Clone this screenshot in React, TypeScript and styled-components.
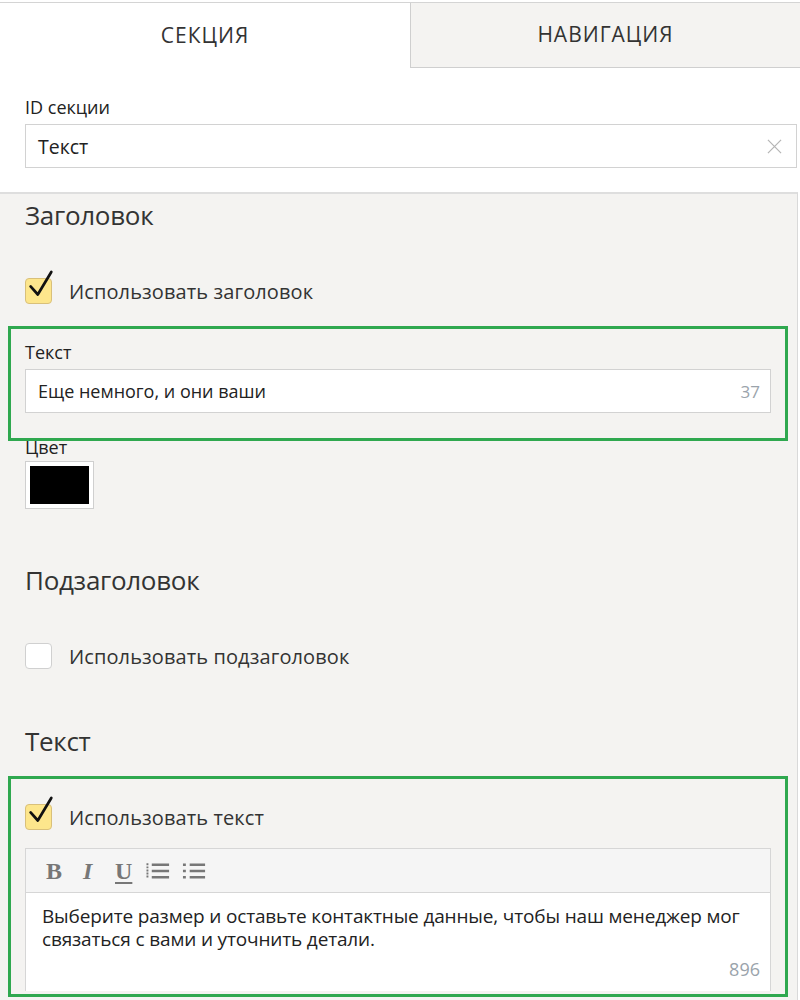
import styled, { createGlobalStyle } from "styled-components";

const GlobalStyle = createGlobalStyle`
  html, body {
    margin: 0;
    padding: 0;
    background: #ffffff;
  }
  body {
    font-family: "Open Sans", "Noto Sans", sans-serif;
    color: #333;
  }
`;

const App = () => {
  return (
    <>
      <GlobalStyle />
      <Page>
        <Tabs>
          <Tab active>СЕКЦИЯ</Tab>
          <Tab>НАВИГАЦИЯ</Tab>
        </Tabs>

        <TopArea>
          <FieldLabel>ID секции</FieldLabel>
          <InputBox>
            <InputText>Текст</InputText>
            <ClearIcon viewBox="0 0 16 16">
              <path d="M1 1 L15 15 M15 1 L1 15" />
            </ClearIcon>
          </InputBox>
        </TopArea>

        <Panel>
          <Heading top={6}>Заголовок</Heading>
          <CheckRow top={47}>
            <CheckBox checked>
              <CheckMark />
            </CheckBox>
            <CheckLabel>Использовать заголовок</CheckLabel>
          </CheckRow>

          <Highlight top={21} padTop={13} padBottom={25}>
            <FieldLabel>Текст</FieldLabel>
            <InputBox>
              <InputText big>Еще немного, и они ваши</InputText>
              <Counter>37</Counter>
            </InputBox>
          </Highlight>

          <ColorLabel>Цвет</ColorLabel>
          <Swatch>
            <SwatchFill />
          </Swatch>

          <Heading top={56}>Подзаголовок</Heading>
          <CheckRow top={47}>
            <CheckBox />
            <CheckLabel>Использовать подзаголовок</CheckLabel>
          </CheckRow>

          <Heading top={56}>Текст</Heading>

          <Highlight top={20} padTop={24} padBottom={3}>
            <CheckRow top={0}>
              <CheckBox checked>
                <CheckMark />
              </CheckBox>
              <CheckLabel>Использовать текст</CheckLabel>
            </CheckRow>
            <Editor>
              <Toolbar>
                <ToolButton w={37}>B</ToolButton>
                <ToolButton w={32} italic>I</ToolButton>
                <ToolButton w={31} underline>U</ToolButton>
                <ListIcon viewBox="0 0 26 18">
                  <path d="M1.5 1 V17" strokeWidth={2} strokeDasharray="2 1.2" />
                  <path d="M6 2.5 H24 M6 9 H24 M6 15.5 H24" />
                </ListIcon>
                <ListIcon viewBox="0 0 26 18">
                  <path d="M1 2.5 H4 M1 9 H4 M1 15.5 H4" />
                  <path d="M8 2.5 H24 M8 9 H24 M8 15.5 H24" />
                </ListIcon>
              </Toolbar>
              <EditorBody>
                <EditorText>
                  Выберите размер и оставьте контактные данные, чтобы наш менеджер мог
                  связаться с вами и уточнить детали.
                </EditorText>
                <EditorCounter>896</EditorCounter>
              </EditorBody>
            </Editor>
          </Highlight>
        </Panel>
      </Page>
    </>
  );
};

export default App;

const CheckMark = () => (
  <CheckSvg viewBox="0 0 30 34">
    <path d="M4 18 L12 27 L27 2" />
  </CheckSvg>
);

const Page = styled.div`
  width: 800px;
  height: 1000px;
  overflow: hidden;
  background: #fff;
`;

const Tabs = styled.div`
  display: grid;
  grid-template-columns: 410px 1fr;
  height: 66px;
  border-top: 1px solid #d4d4d4;
  margin-top: 2px;
  box-sizing: border-box;
`;

const Tab = styled.div<{ active?: boolean }>`
  display: flex;
  align-items: center;
  justify-content: center;
  padding-bottom: 2px;
  font-size: 21px;
  letter-spacing: 1px;
  color: #333;
  background: ${(p) => (p.active ? "#fff" : "#f4f3f1")};
  border-left: ${(p) => (p.active ? "none" : "1px solid #cfcfcf")};
  border-bottom: ${(p) => (p.active ? "none" : "1px solid #cfcfcf")};
  box-sizing: border-box;
`;

const TopArea = styled.div`
  padding: 29px 3px 24px 25px;
`;

const FieldLabel = styled.div`
  font-size: 18px;
  line-height: 20px;
  color: #222;
  margin-bottom: 7px;
`;

const InputBox = styled.div`
  display: flex;
  align-items: center;
  height: 44px;
  box-sizing: border-box;
  border: 1px solid #d2d2d2;
  background: #fff;
  padding: 0 14px 0 12px;
`;

const InputText = styled.div<{ big?: boolean }>`
  flex: 1;
  font-size: ${(p) => (p.big ? "18px" : "19.5px")};
  color: #222;
`;

const ClearIcon = styled.svg`
  width: 15px;
  height: 15px;
  stroke: #b5b5b5;
  stroke-width: 1.3;
  fill: none;
`;

const Counter = styled.div`
  font-size: 17px;
  color: #9aa3ab;
  margin-right: -4px;
`;

const Panel = styled.div`
  background: #f4f3f1;
  border-top: 2px solid #dedede;
  border-right: 1px solid #d9d9d9;
  width: 798px;
  box-sizing: border-box;
  padding: 0 26px 0 25px;
  height: 820px;
`;

const Heading = styled.div<{ top: number }>`
  margin-top: ${(p) => p.top}px;
  font-size: 26px;
  line-height: 30px;
  color: #333;
  letter-spacing: -0.3px;
`;

const CheckRow = styled.div<{ top: number }>`
  display: flex;
  align-items: center;
  gap: 17px;
  margin-top: ${(p) => p.top}px;
  height: 28px;
`;

const CheckBox = styled.div<{ checked?: boolean }>`
  position: relative;
  width: 27px;
  height: 26px;
  box-sizing: border-box;
  border-radius: 4px;
  background: ${(p) => (p.checked ? "#fde68c" : "#fff")};
  border: 1px solid ${(p) => (p.checked ? "#d9c07a" : "#d0d0d0")};
  flex-shrink: 0;
`;

const CheckSvg = styled.svg`
  position: absolute;
  left: 1px;
  top: -9px;
  width: 27px;
  height: 31px;
  fill: none;
  stroke: #111;
  stroke-width: 3;
  stroke-linecap: round;
  stroke-linejoin: round;
`;

const CheckLabel = styled.div`
  font-size: 20px;
  color: #333;
  letter-spacing: 0.1px;
`;

const Highlight = styled.div<{ top: number; padTop: number; padBottom: number }>`
  position: relative;
  z-index: 1;
  margin: ${(p) => p.top}px -17px 0 -17px;
  border: 3px solid #2fa84f;
  padding: ${(p) => p.padTop}px 14px ${(p) => p.padBottom}px 14px;
`;

const ColorLabel = styled.div`
  font-size: 18px;
  line-height: 20px;
  color: #222;
  margin-top: -4px;
`;

const Swatch = styled.div`
  margin-top: 4px;
  width: 69px;
  height: 48px;
  box-sizing: border-box;
  border: 1px solid #cfcfcf;
  background: #fff;
  padding: 4px;
`;

const SwatchFill = styled.div`
  width: 100%;
  height: 100%;
  background: #000;
`;

const Editor = styled.div`
  margin-top: 17px;
  border: 1px solid #d6d6d6;
  border-bottom: none;
  background: #fff;
`;

const Toolbar = styled.div`
  display: flex;
  align-items: center;
  height: 43px;
  padding-left: 20px;
  background: #f5f5f5;
  border-bottom: 1px solid #d6d6d6;
`;

const ToolButton = styled.div<{ w: number; italic?: boolean; underline?: boolean }>`
  font-family: "Liberation Serif", "DejaVu Serif", serif;
  font-weight: bold;
  font-size: 24px;
  line-height: 24px;
  color: #777;
  width: ${(p) => p.w}px;
  font-style: ${(p) => (p.italic ? "italic" : "normal")};
  text-decoration: ${(p) => (p.underline ? "underline" : "none")};
  text-underline-offset: 3px;
  text-decoration-thickness: 2px;
`;

const ListIcon = styled.svg`
  width: 25px;
  height: 18px;
  margin-right: 11px;
  fill: none;
  stroke: #777;
  stroke-width: 2.6;
`;

const EditorBody = styled.div`
  padding: 12px 10px 10px 16px;
  display: flex;
  flex-direction: column;
`;

const EditorText = styled.div`
  font-size: 19px;
  line-height: 23px;
  color: #222;
  letter-spacing: -0.15px;
`;

const EditorCounter = styled.div`
  align-self: flex-end;
  margin-top: 6px;
  font-size: 18px;
  color: #9aa3ab;
`;
